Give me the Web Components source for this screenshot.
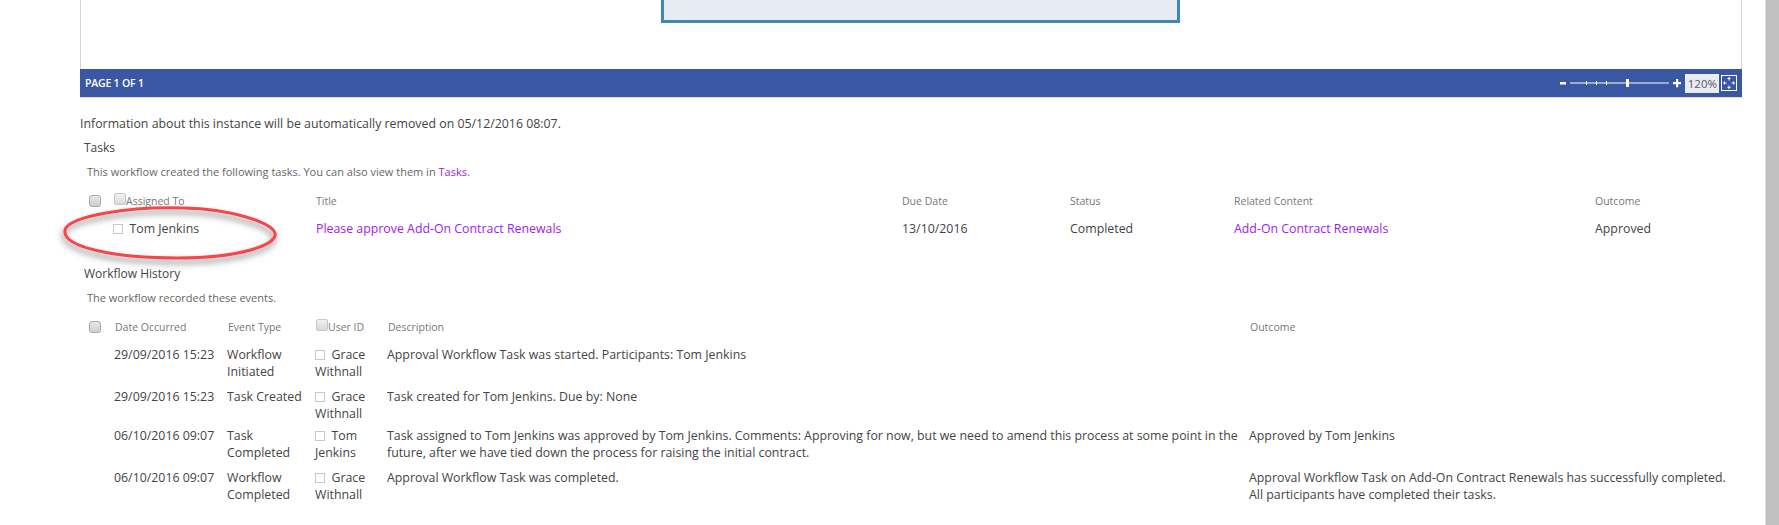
<!DOCTYPE html>
<html>
<head>
<meta charset="utf-8">
<title>Workflow status</title>
<style>
  html, body { margin: 0; background: #fff; }
  body { font-family: "Open Sans", "Liberation Sans", sans-serif; font-size: 12.35px; color: #444; }
  a { color: #a020f0; text-decoration: none; }
</style>
</head>
<body>

<template id="wf-page-tpl">
  <style>
    :host { display: flex; height: 525px; overflow: hidden; position: relative; }
    #main { flex: 1; padding-left: 80px; padding-right: 23px; min-width: 0; }
    #scroll { width: 14px; background: #c0c0c0; border-left: 1px solid #dcdcdc; box-sizing: border-box; }
  </style>
  <div id="main"><slot></slot></div>
  <div id="scroll"></div>
</template>

<template id="wf-viewer-tpl">
  <style>
    :host { display: block; }
    #canvas { height: 69px; border: solid #d4d4d4; border-width: 0 1px; display: flex; justify-content: center; box-sizing: border-box; }
    #sheet { width: 519px; height: 23px; box-sizing: border-box; background: #e7ecf3; border: 3px solid #3f87b5; border-top: 0; margin-left: 19px; }
    #bar { height: 28px; background: #3a57a3; border-bottom: 1px solid #d9deea; display: flex; align-items: center; color: #fff; font-size: 10.5px; padding: 0 5px 0 5px; }
    #label { flex: 1; font-weight: 600; letter-spacing: -.2px; }
    svg { display: block; }
    #pct { width: 34px; height: 19px; background: #e9ebf5; color: #555; font-size: 11.5px; line-height: 19px; text-align: right; padding-right: 2px; box-sizing: border-box; margin: 0 2px 0 4px; }
  </style>
  <div id="canvas"><div id="sheet"></div></div>
  <div id="bar">
    <div id="label"><slot></slot></div>
    <svg width="121" height="16" viewBox="0 0 121 16" fill="#fff">
      <rect x="0" y="7" width="6" height="2.5"/>
      <rect x="10" y="7.500" width="99" height="1"/>
      <rect x="26" y="6" width="1" height="4"/>
      <rect x="36" y="6" width="1" height="4"/>
      <rect x="46" y="6" width="1" height="4"/>
      <rect x="66" y="4" width="3" height="8"/>
      <path d="M113 7h3V4h2.200v3h2.800v2.200h-2.800v3H116v-3h-3z"/>
    </svg>
    <div id="pct">120%</div>
    <svg width="16" height="16" viewBox="0 0 16 16" fill="none" stroke="#fff">
      <rect x=".5" y=".5" width="15" height="15"/>
      <path d="M8 2v3.500M6.500 3.500h3M8 10.500V14M6.500 12.500h3M2 8h3.500M3.500 6.500v3M10.500 8H14M12.500 6.500v3"/>
    </svg>
  </div>
</template>

<template id="wf-section-tpl">
  <style>
    :host { display: block; padding-left: 4px; }
    #title { color: #444; font-size: 12px; line-height: 17px; }
    #desc { color: #666; font-size: 11px; line-height: 16px; margin: 8px 0 0 3px; }
  </style>
  <div id="title"></div>
  <div id="desc"><slot name="desc"></slot></div>
  <slot></slot>
</template>

<template id="wf-grid-tpl">
  <style>
    :host { display: grid; margin-left: -4px; line-height: 17px; }
    ::slotted(.h) { color: #777; font-size: 10.5px; line-height: 17px; white-space: nowrap; padding-left: var(--head-inset, 0); }
  </style>
  <slot></slot>
</template>

<template id="wf-check-tpl">
  <style>
    :host { display: inline-block; box-sizing: border-box; width: 10px; height: 10px; border: 1px solid #c8c8c8; background: #fff; vertical-align: -1px; }
    :host([head]) { width: 12px; height: 12px; margin-top: -4px; border-radius: 2px; background: linear-gradient(#f2f2f2, #d8d8d8); vertical-align: 0; }
    :host([all]) { width: 12px; height: 12px; border: 1px solid #a8a8a8; border-radius: 3px; background: linear-gradient(#e8e8e8, #cfcfcf); vertical-align: -2px; }
  </style>
</template>

<template id="wf-callout-tpl">
  <style>
    :host { position: absolute; left: 60px; top: 202px; width: 222px; height: 66px; pointer-events: none; }
    svg { display: block; overflow: visible; }
  </style>
  <svg width="222" height="66" viewBox="0 0 222 66">
    <defs><filter id="s" x="-10%" y="-30%" width="120%" height="170%"><feDropShadow dx="-1" dy="4" stdDeviation="3" flood-color="#000" flood-opacity=".5"/></filter></defs>
    <path d="M5 28C9 14 70 4 124 6c46 1 87 14 91 25 3 12-36 25-97 25C58 56 2 46 5 28z" fill="none" stroke="#f2474c" stroke-width="3" filter="url(#s)"/>
  </svg>
</template>

<wf-page>
  <wf-viewer>PAGE 1 OF 1</wf-viewer>
  <div style="margin-top:17px;line-height:17px;white-space:nowrap">Information about this instance will be automatically removed on 05/12/2016 08:07.</div>

  <wf-section title-text="Tasks" style="margin-top:7px">
    <span slot="desc">This workflow created the following tasks. You can also view them in <a href="#">Tasks</a>.</span>
    <wf-grid columns="34px 202px 586px 168px 164px 361px auto" rows="21px 38px" style="margin-top:13px">
      <div class="h" style="padding-left:9px"><wf-check all></wf-check></div>
      <div class="h"><wf-check head></wf-check>Assigned To</div>
      <div class="h">Title</div>
      <div class="h">Due Date</div>
      <div class="h">Status</div>
      <div class="h">Related Content</div>
      <div class="h">Outcome</div>
      <div></div>
      <div style="padding-top:6px"><wf-check style="margin-left:-1px"></wf-check>&nbsp; Tom Jenkins</div>
      <div style="padding-top:6px"><a href="#">Please approve Add-On Contract Renewals</a></div>
      <div style="padding-top:6px">13/10/2016</div>
      <div style="padding-top:6px">Completed</div>
      <div style="padding-top:6px"><a href="#">Add-On Contract Renewals</a></div>
      <div style="padding-top:6px">Approved</div>
    </wf-grid>
  </wf-section>

  <wf-section title-text="Workflow History" style="margin-top:13px">
    <span slot="desc">The workflow recorded these events.</span>
    <wf-grid columns="34px 113px 88px 72px 862px auto" rows="27px 42px 39px 42px auto" style="margin-top:13px;--head-inset:1px">
      <div class="h" style="padding-left:9px"><wf-check all></wf-check></div>
      <div class="h">Date Occurred</div>
      <div class="h">Event Type</div>
      <div class="h"><wf-check head></wf-check>User ID</div>
      <div class="h">Description</div>
      <div class="h">Outcome</div>

      <div></div><div>29/09/2016 15:23</div><div>Workflow Initiated</div>
      <div><wf-check></wf-check>&nbsp; Grace Withnall</div>
      <div>Approval Workflow Task was started. Participants: Tom Jenkins</div><div></div>

      <div></div><div>29/09/2016 15:23</div><div>Task Created</div>
      <div><wf-check></wf-check>&nbsp; Grace Withnall</div>
      <div>Task created for Tom Jenkins. Due by: None</div><div></div>

      <div></div><div>06/10/2016 09:07</div><div>Task Completed</div>
      <div><wf-check></wf-check>&nbsp; Tom Jenkins</div>
      <div>Task assigned to Tom Jenkins was approved by Tom Jenkins. Comments: Approving for now, but we need to amend this process at some point in the future, after we have tied down the process for raising the initial contract.</div>
      <div>Approved by Tom Jenkins</div>

      <div></div><div>06/10/2016 09:07</div><div>Workflow Completed</div>
      <div><wf-check></wf-check>&nbsp; Grace Withnall</div>
      <div>Approval Workflow Task was completed.</div>
      <div>Approval Workflow Task on Add-On Contract Renewals has successfully completed. All participants have completed their tasks.</div>
    </wf-grid>
  </wf-section>
  <wf-callout></wf-callout>
</wf-page>

<script>
  // Small helper: every element just clones its own template
  function define(tag, setup) {
    const tpl = document.getElementById(tag + '-tpl');
    customElements.define(tag, class extends HTMLElement {
      constructor() {
        super();
        this.attachShadow({mode: 'open'}).appendChild(tpl.content.cloneNode(true));
      }
      connectedCallback() {
        if (setup) setup(this);
      }
    });
  }

  define('wf-page');
  define('wf-viewer');
  define('wf-check');
  define('wf-callout');
  define('wf-section', el => {
    el.shadowRoot.querySelector('#title').textContent = el.getAttribute('title-text');
  });
  define('wf-grid', el => {
    el.style.gridTemplateColumns = el.getAttribute('columns');
    el.style.gridTemplateRows = el.getAttribute('rows');
  });
</script>
</body>
</html>
